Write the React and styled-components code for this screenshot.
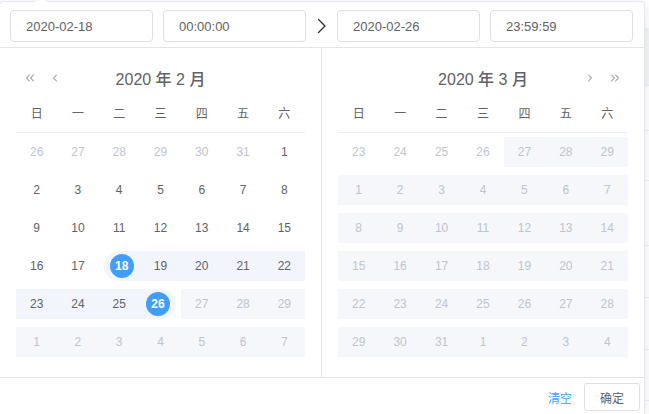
import React from 'react';
import styled, { createGlobalStyle, css } from 'styled-components';

const Global = createGlobalStyle`
  html, body { margin: 0; padding: 0; background: #fff; }
  body {
    font-family: "Liberation Sans", "Noto Sans CJK SC", sans-serif;
    width: 649px; height: 414px; overflow: hidden;
    -webkit-font-smoothing: antialiased;
  }
`;

const Page = styled.div`
  position: relative;
  width: 649px;
  height: 414px;
  overflow: hidden;
`;

const Backdrop = styled.div`
  display: flex;
  flex-direction: column;
  padding-top: 28px;
`;

const BackHead = styled.div`
  height: 57px;
  background: #f3f5f8;
  border-bottom: 1px solid #ebeef5;
`;

const BackRow = styled.div`
  height: ${p => p.$h}px;
  box-sizing: border-box;
  border-bottom: 1px solid #ebeef5;
`;

const Popover = styled.div`
  position: absolute;
  left: -1px;
  top: 1px;
  width: 646px;
  box-sizing: border-box;
  background: #fff;
  border: 1px solid #e4e7ed;
  border-radius: 4px;
  box-shadow: 0 2px 12px 0 rgba(0, 0, 0, 0.1);
  color: #606266;
`;

const Arrow = styled.div`
  position: absolute;
  top: -7px;
  left: 35px;
  width: 0;
  height: 0;
  border: 6px solid transparent;
  border-bottom-color: #e4e7ed;
  border-top-width: 0;
  &::after {
    content: '';
    position: absolute;
    left: -6px;
    top: 1px;
    border: 6px solid transparent;
    border-bottom-color: #fff;
    border-top-width: 0;
  }
`;

const TimeHeader = styled.div`
  display: flex;
  align-items: center;
  height: 46px;
  box-sizing: border-box;
  padding: 8px 11px 5px 10px;
  border-bottom: 1px solid #e4e4e4;
`;

const EditorGroup = styled.div`
  display: flex;
  gap: 10px;
`;

const Input = styled.input`
  width: 143px;
  height: 32px;
  box-sizing: border-box;
  border: 1px solid #dcdfe6;
  border-radius: 4px;
  padding: 0 15px;
  font-family: inherit;
  font-size: 13px;
  color: #606266;
  background: #fff;
  outline: none;
`;

const HeaderArrow = styled.div`
  width: 31px;
  height: 32px;
  display: flex;
  align-items: center;
  justify-content: center;
`;

const Body = styled.div`
  display: flex;
`;

const Panel = styled.div`
  width: 50%;
  box-sizing: border-box;
  padding: 16px;
  ${p => p.$divider && css`border-right: 1px solid #e4e4e4;`}
`;

const PanelHeader = styled.div`
  height: 28px;
  display: grid;
  grid-template-columns: 1fr auto 1fr;
  align-items: center;
`;

const IconGroup = styled.div`
  display: flex;
  gap: 13px;
  justify-self: ${p => (p.$end ? 'end' : 'start')};
  padding: ${p => (p.$end ? '0 7px 0 0' : '0 0 0 8px')};
`;

const IconBtn = styled.span`
  width: 12px;
  height: 12px;
  display: flex;
  align-items: center;
  justify-content: center;
`;

const Title = styled.div`
  font-size: 16px;
  font-weight: 500;
  color: #606266;
  white-space: nowrap;
`;

const WeekRow = styled.div`
  display: grid;
  grid-template-columns: repeat(7, 1fr);
  height: 41px;
  box-sizing: border-box;
  border-bottom: 1px solid #ebeef5;
  align-items: center;
  text-align: center;
  font-size: 12px;
  color: #606266;
`;

const DateRow = styled.div`
  display: grid;
  grid-template-columns: repeat(7, 1fr);
`;

const Cell = styled.div`
  padding: 4px 0;
  height: 38px;
  box-sizing: border-box;
`;

const CellInner = styled.div`
  height: 30px;
  display: flex;
  align-items: center;
  justify-content: center;
  font-size: 12px;
  color: ${p => (p.$muted ? '#c0c4cc' : '#606266')};
  background: ${p => (p.$disabled ? '#f5f7fa' : p.$range ? '#f2f6fc' : 'transparent')};
  ${p => p.$start && css`
    margin-left: 5px;
    border-top-left-radius: 15px;
    border-bottom-left-radius: 15px;
  `}
  ${p => p.$end && css`
    margin-right: 5px;
    border-top-right-radius: 15px;
    border-bottom-right-radius: 15px;
  `}
`;

const Day = styled.span`
  width: 24px;
  height: 24px;
  line-height: 24px;
  text-align: center;
  border-radius: 50%;
  ${p => p.$selected && css`
    background: #409eff;
    color: #fff;
    font-weight: bold;
  `}
`;

const Footer = styled.div`
  border-top: 1px solid #e4e4e4;
  padding: 5px 4px;
  display: flex;
  justify-content: flex-end;
  align-items: center;
  gap: 12px;
`;

const TextBtn = styled.button`
  border: none;
  background: none;
  padding: 0;
  font-family: inherit;
  font-size: 12px;
  color: #409eff;
`;

const PlainBtn = styled.button`
  height: 28px;
  padding: 0 15px;
  border: 1px solid #dcdfe6;
  border-radius: 3px;
  background: #fff;
  font-family: inherit;
  font-size: 12px;
  color: #606266;
`;

const DArrow = ({ dir }) => (
  <svg width="12" height="12" viewBox="0 0 12 12">
    <g fill="none" stroke="#606266" strokeWidth="0.9" strokeLinecap="round" strokeLinejoin="round"
      transform={dir === 'right' ? 'translate(12 0) scale(-1 1)' : undefined}>
      <polyline points="5.5,3 2.5,6 5.5,9" />
      <polyline points="9.5,3 6.5,6 9.5,9" />
    </g>
  </svg>
);

const SArrow = ({ dir }) => (
  <svg width="12" height="12" viewBox="0 0 12 12">
    <polyline
      points={dir === 'right' ? '4.5,3 7.5,6 4.5,9' : '7.5,3 4.5,6 7.5,9'}
      fill="none" stroke="#606266" strokeWidth="0.9" strokeLinecap="round" strokeLinejoin="round" />
  </svg>
);

const BigArrow = () => (
  <svg width="10" height="16" viewBox="0 0 10 16">
    <polyline points="1.5,1.5 8,8 1.5,14.5" fill="none" stroke="#303133" strokeWidth="1.3"
      strokeLinecap="round" strokeLinejoin="round" />
  </svg>
);

const WEEK = ['日', '一', '二', '三', '四', '五', '六'];

// m: muted (other month), d: disabled, r: in range, s: start, e: end
const c = (n, flags = '') => ({
  n,
  muted: flags.includes('m'),
  disabled: flags.includes('d'),
  range: flags.includes('r'),
  start: flags.includes('s'),
  end: flags.includes('e'),
});

const feb = [
  [c(26, 'm'), c(27, 'm'), c(28, 'm'), c(29, 'm'), c(30, 'm'), c(31, 'm'), c(1)],
  [2, 3, 4, 5, 6, 7, 8].map(n => c(n)),
  [9, 10, 11, 12, 13, 14, 15].map(n => c(n)),
  [c(16), c(17), c(18, 'rs'), c(19, 'r'), c(20, 'r'), c(21, 'r'), c(22, 'r')],
  [c(23, 'r'), c(24, 'r'), c(25, 'r'), c(26, 're'), c(27, 'md'), c(28, 'md'), c(29, 'md')],
  [1, 2, 3, 4, 5, 6, 7].map(n => c(n, 'md')),
];

const mar = [
  [c(23, 'm'), c(24, 'm'), c(25, 'm'), c(26, 'm'), c(27, 'md'), c(28, 'md'), c(29, 'md')],
  [1, 2, 3, 4, 5, 6, 7].map(n => c(n, 'md')),
  [8, 9, 10, 11, 12, 13, 14].map(n => c(n, 'md')),
  [15, 16, 17, 18, 19, 20, 21].map(n => c(n, 'md')),
  [22, 23, 24, 25, 26, 27, 28].map(n => c(n, 'md')),
  [29, 30, 31, 1, 2, 3, 4].map(n => c(n, 'md')),
];

const Month = ({ title, rows, side }) => (
  <Panel $divider={side === 'left'}>
    <PanelHeader>
      {side === 'left' ? (
        <IconGroup>
          <IconBtn><DArrow dir="left" /></IconBtn>
          <IconBtn><SArrow dir="left" /></IconBtn>
        </IconGroup>
      ) : <span />}
      <Title>{title}</Title>
      {side === 'right' ? (
        <IconGroup $end>
          <IconBtn><SArrow dir="right" /></IconBtn>
          <IconBtn><DArrow dir="right" /></IconBtn>
        </IconGroup>
      ) : <span />}
    </PanelHeader>
    <WeekRow>
      {WEEK.map(w => <span key={w}>{w}</span>)}
    </WeekRow>
    {rows.map((row, i) => (
      <DateRow key={i}>
        {row.map((d, j) => (
          <Cell key={j}>
            <CellInner
              $muted={d.muted}
              $disabled={d.disabled}
              $range={d.range}
              $start={d.start}
              $end={d.end}
            >
              <Day $selected={d.start || d.end}>{d.n}</Day>
            </CellInner>
          </Cell>
        ))}
      </DateRow>
    ))}
  </Panel>
);

export default function App() {
  return (
    <Page>
      <Global />
      <Backdrop>
        <BackHead />
        <BackRow $h={45} />
        <BackRow $h={50} />
        <BackRow $h={65} />
        <BackRow $h={52} />
        <BackRow $h={52} />
        <BackRow $h={51} />
      </Backdrop>
      <Popover>
        <Arrow />
        <TimeHeader>
          <EditorGroup>
            <Input readOnly value="2020-02-18" />
            <Input readOnly value="00:00:00" />
          </EditorGroup>
          <HeaderArrow><BigArrow /></HeaderArrow>
          <EditorGroup>
            <Input readOnly value="2020-02-26" />
            <Input readOnly value="23:59:59" />
          </EditorGroup>
        </TimeHeader>
        <Body>
          <Month side="left" title="2020 年 2 月" rows={feb} />
          <Month side="right" title="2020 年 3 月" rows={mar} />
        </Body>
        <Footer>
          <TextBtn>清空</TextBtn>
          <PlainBtn>确定</PlainBtn>
        </Footer>
      </Popover>
    </Page>
  );
}
